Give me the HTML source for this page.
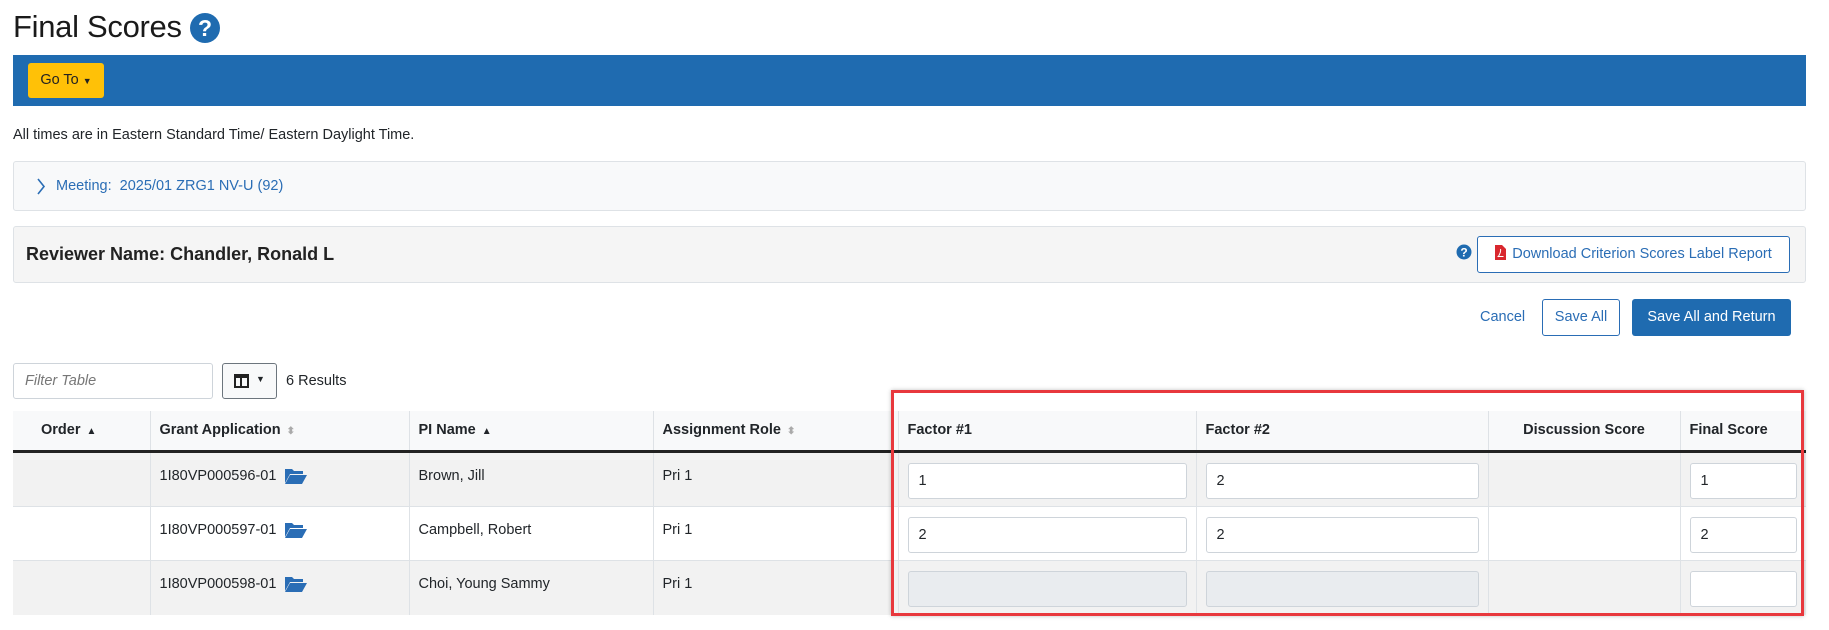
<!DOCTYPE html>
<html><head><meta charset="utf-8"><style>
*{box-sizing:border-box;margin:0;padding:0}
body{width:1829px;height:630px;overflow:hidden;background:#fff;font-family:"Liberation Sans",sans-serif;color:#212529;font-size:14.5px;position:relative}
.a{position:absolute}
h1{position:absolute;left:13px;top:9px;font-size:31px;font-weight:500;color:#1a1a1a;letter-spacing:-0.3px}
.bar{left:13px;top:55px;width:1793px;height:51px;background:#1f6bb0}
.goto{left:28px;top:63px;width:76px;height:35px;background:#ffc107;border-radius:3px;font-size:14.5px;line-height:35px;text-align:center;color:#222}
.panel{left:13px;width:1793px;border:1px solid #dee2e6;border-radius:3px}
.btn{position:absolute;border-radius:3px;font-size:14.5px;text-align:center}
table{position:absolute;left:13px;top:411px;border-collapse:collapse;font-size:14.5px}
th{height:40px;background:#f8f9fa;text-align:left;font-weight:bold;border-bottom:3px solid #222;border-left:1px solid #dee2e6;padding:0 9px;font-size:14.5px}
td{border-left:1px solid #dee2e6;border-top:1px solid #dee2e6;padding:0 9px;vertical-align:top}
tr.g td{background:#f2f2f2}
td .t{margin-top:14px;line-height:18px;height:18px}
.in{height:36px;border:1px solid #ced4da;border-radius:3px;background:#fff;margin-top:10px;padding:0 10px;line-height:34px}
.in.d{background:#e9ecef}
.fold{display:inline-block;vertical-align:top;margin-left:8px;margin-top:0}
.s{color:#aaa;font-size:10px;margin-left:6px}
.u{font-size:10px;margin-left:6px}
</style></head><body>
<h1>Final Scores</h1>
<svg class="a" style="left:189px;top:12px" width="32" height="32" viewBox="0 0 32 32"><circle cx="16" cy="16" r="15" fill="#1f6bb0"/><text x="16" y="24" text-anchor="middle" font-family="Liberation Sans" font-weight="bold" font-size="23" fill="#fff">?</text></svg>
<div class="a bar"></div>
<div class="a goto">Go To <span style="font-size:9px">▼</span></div>
<div class="a" style="left:13px;top:127px">All times are in Eastern Standard Time/ Eastern Daylight Time.</div>
<div class="a panel" style="top:161px;height:50px;background:#f8f9fa"></div>
<svg class="a" style="left:36px;top:178px" width="10" height="17" viewBox="0 0 10 17"><path d="M2 1l6 7.5L2 16" stroke="#2a6db5" stroke-width="1.6" fill="none"/></svg>
<div class="a" style="left:56px;top:178px;color:#2a6db5">Meeting:&nbsp; 2025/01 ZRG1 NV-U (92)</div>
<div class="a panel" style="top:226px;height:57px;background:#f5f5f5"></div>
<div class="a" style="left:26px;top:244px;font-size:18px;font-weight:bold;color:#222">Reviewer Name: Chandler, Ronald L</div>
<svg class="a" style="left:1456px;top:244px" width="16" height="16" viewBox="0 0 16 16"><circle cx="8" cy="8" r="7.5" fill="#1f6bb0"/><text x="8" y="12.5" text-anchor="middle" font-family="Liberation Sans" font-weight="bold" font-size="12" fill="#fff">?</text></svg>
<div class="btn" style="left:1477px;top:236px;width:313px;height:37px;border:1px solid #2a6db5;background:#fff;color:#2a6db5;line-height:35px"><svg width="11" height="15" viewBox="0 0 11 15" style="vertical-align:-2px;margin-right:6px"><path d="M0 0h7l4 4v11H0z" fill="#d9272e"/><path d="M3 12c2-3 3-6 2.5-8M2.5 11.5h6" stroke="#fff" stroke-width="1" fill="none"/></svg>Download Criterion Scores Label Report</div>
<div class="a" style="left:1480px;top:309px;color:#2a6db5">Cancel</div>
<div class="btn" style="left:1542px;top:299px;width:78px;height:37px;border:1px solid #2a6db5;color:#2a6db5;line-height:35px">Save All</div>
<div class="btn" style="left:1632px;top:299px;width:159px;height:37px;background:#1f6bb0;color:#fff;line-height:37px">Save All and Return</div>
<div class="a" style="left:13px;top:363px;width:200px;height:36px;border:1px solid #ced4da;border-radius:3px;padding:0 11px;line-height:34px;font-style:italic;color:#777">Filter Table</div>
<div class="a" style="left:222px;top:363px;width:55px;height:36px;border:1px solid #6c757d;border-radius:3px;background:#f8f9fa"><span style="position:absolute;left:11px;top:10px;width:15px;height:14px;border:2px solid #222;border-top-width:4px"></span><span style="position:absolute;left:17px;top:12px;width:2px;height:10px;background:#222"></span><span style="position:absolute;left:33px;top:10px;font-size:9px">▼</span></div>
<div class="a" style="left:286px;top:373px">6 Results</div>
<table>
<tr><th style="width:137px;border-left:none;padding-left:28px">Order<span class="u">▲</span></th><th style="width:259px">Grant Application<span class="s">⬍</span></th><th style="width:244px">PI Name<span class="u">▲</span></th><th style="width:245px">Assignment Role<span class="s">⬍</span></th><th style="width:298px">Factor #1</th><th style="width:292px">Factor #2</th><th style="width:192px;text-align:center">Discussion Score</th><th style="width:126px">Final Score</th></tr>
<tr class="g" style="height:55px"><td style="border-left:none"></td><td><div class="t">1I80VP000596-01<svg class="fold" width="24" height="18" viewBox="0 0 24 18"><path d="M1 2h7l2 2h9v3H6L1 16z" fill="#2a6db5"/><path d="M6 8h17l-5 9H1z" fill="#2a6db5"/></svg></div></td><td><div class="t">Brown, Jill</div></td><td><div class="t">Pri 1</div></td><td><div class="in">1</div></td><td><div class="in">2</div></td><td></td><td><div class="in">1</div></td></tr>
<tr style="height:54px"><td style="border-left:none"></td><td><div class="t">1I80VP000597-01<svg class="fold" width="24" height="18" viewBox="0 0 24 18"><path d="M1 2h7l2 2h9v3H6L1 16z" fill="#2a6db5"/><path d="M6 8h17l-5 9H1z" fill="#2a6db5"/></svg></div></td><td><div class="t">Campbell, Robert</div></td><td><div class="t">Pri 1</div></td><td><div class="in">2</div></td><td><div class="in">2</div></td><td></td><td><div class="in">2</div></td></tr>
<tr class="g" style="height:55px"><td style="border-left:none"></td><td><div class="t">1I80VP000598-01<svg class="fold" width="24" height="18" viewBox="0 0 24 18"><path d="M1 2h7l2 2h9v3H6L1 16z" fill="#2a6db5"/><path d="M6 8h17l-5 9H1z" fill="#2a6db5"/></svg></div></td><td><div class="t">Choi, Young Sammy</div></td><td><div class="t">Pri 1</div></td><td><div class="in d"></div></td><td><div class="in d"></div></td><td></td><td><div class="in"></div></td></tr>
</table>
<div class="a" style="left:891px;top:390px;width:913px;height:226px;border:3px solid #e8383d;box-shadow:0 0 4px rgba(0,0,0,.25)"></div>
</body></html>
